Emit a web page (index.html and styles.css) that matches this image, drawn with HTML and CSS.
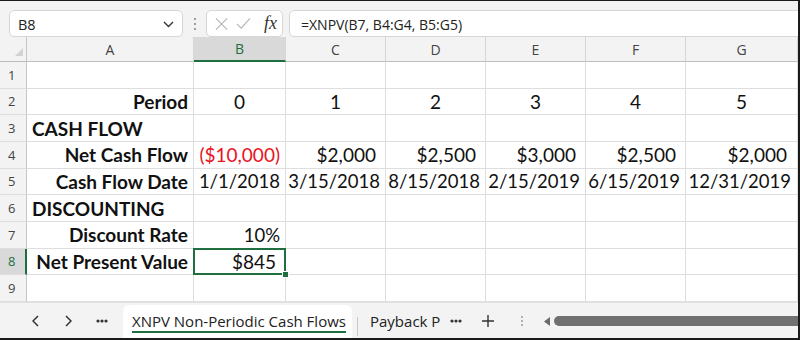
FILE: index.html
```html
<!DOCTYPE html>
<html lang="en">
<head>
    <meta charset="UTF-8">
    <title>XNPV Non-Periodic Cash Flows</title>
    <link rel="stylesheet" href="styles.css">
</head>
<body>
    <div class="window">
        <div class="formula-bar">
            <div class="name-box">
                <span>B8</span>
                <svg class="chevron" width="11" height="7" viewBox="0 0 11 7"><path d="M1 1 L5.5 5.5 L10 1" fill="none" stroke="#333" stroke-width="1.4"/></svg>
            </div>
            <div class="grip">
                <svg width="4" height="14" viewBox="0 0 4 14"><circle cx="2" cy="2" r="1.1" fill="#8a8a8a"/><circle cx="2" cy="7" r="1.1" fill="#8a8a8a"/><circle cx="2" cy="12" r="1.1" fill="#8a8a8a"/></svg>
            </div>
            <div class="fx-box">
                <svg width="14" height="14" viewBox="0 0 14 14"><path d="M1 1 L13 13 M13 1 L1 13" stroke="#b5b5b5" stroke-width="1.2"/></svg>
                <svg width="16" height="13" viewBox="0 0 16 13"><path d="M1 7 L5.5 11.5 L15 1" fill="none" stroke="#b5b5b5" stroke-width="1.2"/></svg>
                <span class="fx">fx</span>
            </div>
            <div class="formula">=XNPV(B7, B4:G4, B5:G5)</div>
        </div>

        <div class="sheet">
            <div class="corner">
                <svg width="8" height="8" viewBox="0 0 8 8"><polygon points="8,0 8,8 0,8" fill="#d2d2d2"/></svg>
            </div>
            <div class="col-head">A</div>
            <div class="col-head active">B</div>
            <div class="col-head">C</div>
            <div class="col-head">D</div>
            <div class="col-head">E</div>
            <div class="col-head">F</div>
            <div class="col-head">G</div>

            <div class="row-head">1</div>
            <div class="cell"></div><div class="cell"></div><div class="cell"></div><div class="cell"></div><div class="cell"></div><div class="cell"></div><div class="cell"></div>

            <div class="row-head">2</div>
            <div class="cell label">Period</div>
            <div class="cell center">0</div>
            <div class="cell center">1</div>
            <div class="cell center">2</div>
            <div class="cell center">3</div>
            <div class="cell center">4</div>
            <div class="cell center">5</div>

            <div class="row-head">3</div>
            <div class="cell section">CASH FLOW</div>
            <div class="cell"></div><div class="cell"></div><div class="cell"></div><div class="cell"></div><div class="cell"></div><div class="cell"></div>

            <div class="row-head">4</div>
            <div class="cell label">Net Cash Flow</div>
            <div class="cell money negative">($10,000)</div>
            <div class="cell money">$2,000</div>
            <div class="cell money">$2,500</div>
            <div class="cell money">$3,000</div>
            <div class="cell money">$2,500</div>
            <div class="cell money wide">$2,000</div>

            <div class="row-head">5</div>
            <div class="cell label">Cash Flow Date</div>
            <div class="cell date">1/1/2018</div>
            <div class="cell date">3/15/2018</div>
            <div class="cell date">8/15/2018</div>
            <div class="cell date">2/15/2019</div>
            <div class="cell date">6/15/2019</div>
            <div class="cell date wide">12/31/2019</div>

            <div class="row-head">6</div>
            <div class="cell section">DISCOUNTING</div>
            <div class="cell"></div><div class="cell"></div><div class="cell"></div><div class="cell"></div><div class="cell"></div><div class="cell"></div>

            <div class="row-head">7</div>
            <div class="cell label">Discount Rate</div>
            <div class="cell date">10%</div>
            <div class="cell"></div><div class="cell"></div><div class="cell"></div><div class="cell"></div><div class="cell"></div>

            <div class="row-head active">8</div>
            <div class="cell label">Net Present Value</div>
            <div class="cell money selected">$845<span class="fill-handle"></span></div>
            <div class="cell"></div><div class="cell"></div><div class="cell"></div><div class="cell"></div><div class="cell"></div>

            <div class="row-head">9</div>
            <div class="cell"></div><div class="cell"></div><div class="cell"></div><div class="cell"></div><div class="cell"></div><div class="cell"></div><div class="cell"></div>
        </div>

        <div class="tab-bar">
            <div class="nav">
                <svg width="7" height="12" viewBox="0 0 7 12"><path d="M6 1 L1 6 L6 11" fill="none" stroke="#333" stroke-width="1.5"/></svg>
            </div>
            <div class="nav">
                <svg width="7" height="12" viewBox="0 0 7 12"><path d="M1 1 L6 6 L1 11" fill="none" stroke="#333" stroke-width="1.5"/></svg>
            </div>
            <div class="nav">
                <svg width="12" height="4" viewBox="0 0 12 4"><circle cx="2" cy="2" r="1.6" fill="#333"/><circle cx="6" cy="2" r="1.6" fill="#333"/><circle cx="10" cy="2" r="1.6" fill="#333"/></svg>
            </div>
            <div class="tab active"><span>XNPV Non-Periodic Cash Flows</span></div>
            <div class="tab-sep"></div>
            <div class="tab next">Payback P</div>
            <div class="nav more">
                <svg width="12" height="4" viewBox="0 0 12 4"><circle cx="2" cy="2" r="1.6" fill="#333"/><circle cx="6" cy="2" r="1.6" fill="#333"/><circle cx="10" cy="2" r="1.6" fill="#333"/></svg>
            </div>
            <div class="nav plus">
                <svg width="14" height="14" viewBox="0 0 14 14"><path d="M7 1 V13 M1 7 H13" stroke="#333" stroke-width="1.4"/></svg>
            </div>
            <div class="nav grip-small">
                <svg width="4" height="12" viewBox="0 0 4 12"><circle cx="2" cy="2" r="1" fill="#9a9a9a"/><circle cx="2" cy="6" r="1" fill="#9a9a9a"/><circle cx="2" cy="10" r="1" fill="#9a9a9a"/></svg>
            </div>
            <div class="scroll">
                <svg width="6" height="9" viewBox="0 0 6 9"><polygon points="6,0 6,9 0,4.5" fill="#6a6a6a"/></svg>
                <div class="thumb"></div>
            </div>
        </div>
    </div>
</body>
</html>
```

FILE: styles.css
```css
body {
    margin: 0;
    padding: 0;
    font-family: "Open Sans", "Noto Sans", sans-serif;
    background: #ffffff;
}

.window {
    width: 800px;
    height: 340px;
    box-sizing: border-box;
    border-top: 1px solid #1a1a1a;
    border-right: 2px solid #1a1a1a;
    border-bottom: 2px solid #1a1a1a;
    background: #f3f3f3;
    display: flex;
    flex-direction: column;
    overflow: hidden;
}

/* formula bar */
.formula-bar {
    height: 36px;
    flex-shrink: 0;
    box-sizing: border-box;
    padding: 9px 0 0 9px;
    display: flex;
    align-items: stretch;
}

.name-box, .fx-box, .formula {
    background: #ffffff;
    border: 1px solid #d6d6d6;
    border-radius: 5px;
    box-sizing: border-box;
    display: flex;
    align-items: center;
}

.name-box {
    width: 174px;
    padding: 2px 8px 0 8px;
    justify-content: space-between;
    font-size: 14.5px;
    color: #222;
}

.grip {
    width: 23px;
    display: flex;
    align-items: center;
    justify-content: center;
}

.fx-box {
    width: 77px;
    padding: 0 5px 0 8px;
    gap: 8px;
}

.fx {
    font-family: "Liberation Serif", serif;
    font-style: italic;
    font-size: 18px;
    color: #333;
    margin-left: 5px;
}

.formula {
    flex: 1;
    margin-left: 6px;
    margin-right: -6px;
    padding: 2px 0 0 11px;
    font-size: 14px;
    color: #222;
}

/* grid */
.sheet {
    flex-shrink: 0;
    display: grid;
    grid-template-columns: 27px 167px 92px 100px 100px 100px 100px 1fr;
    grid-template-rows: 25px repeat(9, 26.67px);
    background: #ffffff;
}

.corner {
    background: #f3f3f3;
    border-right: 1px solid #c6c6c6;
    border-bottom: 1px solid #bdbdbd;
    display: flex;
    align-items: flex-end;
    justify-content: flex-end;
    padding: 0 3px 5px 0;
}

.col-head {
    background: #f3f3f3;
    border-right: 1px solid #d6d6d6;
    border-bottom: 1px solid #bdbdbd;
    display: flex;
    align-items: center;
    justify-content: center;
    font-size: 14px;
    color: #444;
}

.col-head.active {
    background: #d9d9d9;
    color: #1e6e3f;
    border-bottom: 2px solid #1e6e3f;
}

.row-head {
    background: #f3f3f3;
    border-right: 1px solid #c6c6c6;
    border-bottom: 1px solid #dedede;
    display: flex;
    align-items: center;
    padding-left: 8px;
    font-size: 13px;
    color: #444;
}

.row-head.active {
    background: #d9d9d9;
    color: #1e6e3f;
    border-right: 2px solid #1e6e3f;
}

.cell {
    border-right: 1px solid #dedede;
    border-bottom: 1px solid #dedede;
    display: flex;
    align-items: center;
    font-family: "Lato", "Liberation Sans", sans-serif;
    font-size: 19px;
    color: #111;
    white-space: nowrap;
    position: relative;
}

.label {
    justify-content: flex-end;
    font-weight: bold;
    padding-right: 5px;
}

.section {
    font-weight: bold;
    padding-left: 5px;
}

.center {
    justify-content: center;
}

.money {
    justify-content: flex-end;
    padding-right: 9px;
}

.date {
    justify-content: flex-end;
    padding-right: 5px;
    font-size: 18.5px;
}

.wide {
    padding-right: 10px;
}

.date.wide {
    padding-right: 6px;
}

.negative {
    color: #e8141c;
    padding-right: 5px;
}

.selected::after {
    content: "";
    position: absolute;
    left: -1px;
    top: -1px;
    right: -1px;
    bottom: -1px;
    border: 2px solid #1e6e3f;
}

.fill-handle {
    position: absolute;
    right: -4px;
    bottom: -4px;
    width: 5px;
    height: 5px;
    background: #1e6e3f;
    border: 1px solid #ffffff;
    z-index: 2;
}

/* sheet tabs */
.tab-bar {
    flex: 1;
    min-height: 0;
    display: flex;
    align-items: stretch;
    border-top: 1px solid #e2e2e2;
    padding-top: 2px;
    background: #f3f3f3;
    white-space: nowrap;
}

.nav {
    width: 33px;
    display: flex;
    align-items: center;
    justify-content: center;
}

.nav:first-child {
    margin-left: 19px;
}

.tab {
    display: flex;
    align-items: center;
    font-size: 15px;
    color: #222;
}

.tab.active {
    background: #ffffff;
    margin-left: 5px;
    padding: 0 9px;
    width: 229px;
    box-sizing: border-box;
    border-radius: 6px 6px 0 0;
}

.tab.active span {
    border-bottom: 2px solid #1e6e3f;
    line-height: 20px;
    padding-top: 2px;
}

.tab.next {
    padding: 0 4px 0 12px;
}

.tab-sep {
    width: 1px;
    margin: 12px 0 2px 5px;
    background: #c8c8c8;
}

.nav.more {
    width: 24px;
}

.nav.plus {
    width: 40px;
}

.nav.grip-small {
    width: 28px;
}

.scroll {
    flex: 1;
    display: flex;
    align-items: center;
    padding-left: 8px;
    gap: 4px;
}

.thumb {
    flex: 1;
    height: 10px;
    margin-right: -8px;
    border-radius: 5px;
    background: #707070;
}
```
